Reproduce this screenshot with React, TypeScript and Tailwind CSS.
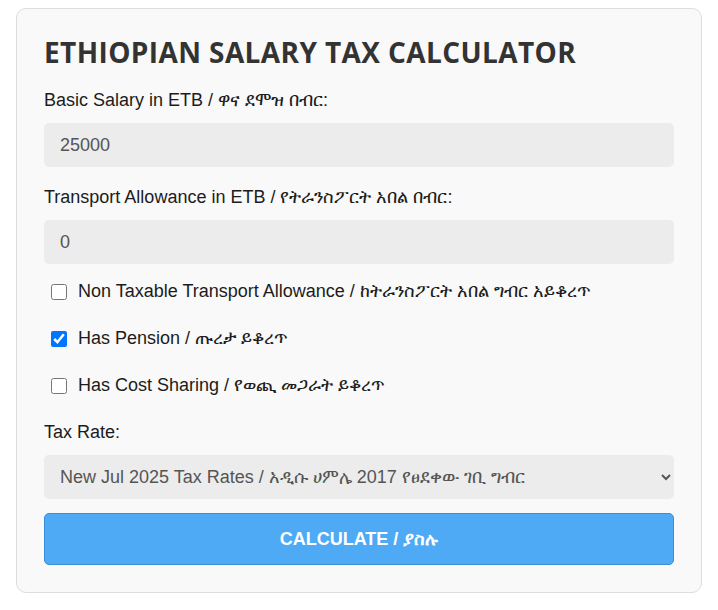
import { useState } from 'react';

const body = { fontFamily: '"Liberation Sans", Arial, "DejaVu Sans", "Noto Sans", sans-serif' };

export default function App() {
  const [basic, setBasic] = useState('25000');
  const [transport, setTransport] = useState('0');
  const [nonTaxable, setNonTaxable] = useState(false);
  const [pension, setPension] = useState(true);
  const [costSharing, setCostSharing] = useState(false);

  const checks = [
    { label: 'Non Taxable Transport Allowance / ከትራንስፖርት አበል ግብር አይቆረጥ', value: nonTaxable, set: setNonTaxable },
    { label: 'Has Pension / ጡረታ ይቆረጥ', value: pension, set: setPension },
    { label: 'Has Cost Sharing / የወጪ መጋራት ይቆረጥ', value: costSharing, set: setCostSharing },
  ];

  return (
    <div className="min-h-screen bg-white px-4 pt-2" style={body}>
      <div className="rounded-[10px] border border-[#dddddd] bg-[#f9f9f9] px-[27px] pt-[26px] pb-[27px]">
        <h2
          className="mb-[21px] text-[28px] font-bold leading-[34px] tracking-[0.4px] text-[#333333]"
          style={{ fontFamily: '"Open Sans", sans-serif' }}
        >
          ETHIOPIAN SALARY TAX CALCULATOR
        </h2>

        <label className="mb-[12px] block text-[18px] leading-[21px] text-[#1c1c1c]">
          Basic Salary in ETB / ዋና ደሞዝ በብር:
        </label>
        <input
          type="number"
          value={basic}
          onChange={(e) => setBasic(e.target.value)}
          className="mb-[20px] block h-[44px] w-full rounded-[5px] bg-[#ececec] px-4 text-[18px] text-[#555555] outline-none"
        />

        <label className="mb-[12px] block text-[18px] leading-[21px] text-[#1c1c1c]">
          Transport Allowance in ETB / የትራንስፖርት አበል በብር:
        </label>
        <input
          type="number"
          value={transport}
          onChange={(e) => setTransport(e.target.value)}
          className="block h-[44px] w-full rounded-[5px] bg-[#ececec] px-4 text-[18px] text-[#555555] outline-none"
        />

        <div className="mt-[17px] flex flex-col gap-[26px]">
          {checks.map((c) => (
            <label key={c.label} className="flex h-[21px] items-center text-[18px] text-[#1c1c1c]">
              <input
                type="checkbox"
                checked={c.value}
                onChange={(e) => c.set(e.target.checked)}
                className="ml-[7px] mr-[11px] h-4 w-4"
              />
              {c.label}
            </label>
          ))}
        </div>

        <label className="mt-[26px] mb-[12px] block text-[18px] leading-[21px] text-[#1c1c1c]">
          Tax Rate:
        </label>
        <select className="block h-[44px] w-full rounded-[5px] bg-[#ececec] px-3 text-[18px] text-[#555555] outline-none">
          <option>New Jul 2025 Tax Rates / አዲሱ ሀምሌ 2017 የፀደቀው ገቢ ግብር</option>
          <option>Old Tax Rates / የቀድሞ ገቢ ግብር</option>
        </select>

        <button className="mt-[14px] block h-[52px] w-full rounded-[5px] border border-[#3a8fd4] bg-[#4eaaf5] text-[18px] font-bold text-white">
          CALCULATE / ያስሉ
        </button>
      </div>
    </div>
  );
}
